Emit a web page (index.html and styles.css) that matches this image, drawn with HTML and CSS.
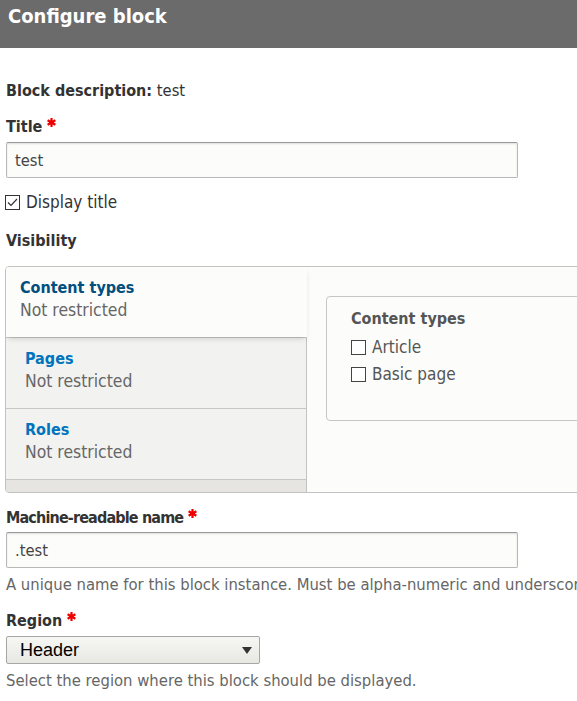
FILE: index.html
```html
<!DOCTYPE html>
<html lang="en">
<head>
<meta charset="utf-8">
<title>Configure block</title>
<link rel="stylesheet" href="styles.css">
</head>
<body>
<header class="dialog-title">Configure block</header>
<main class="form">
  <div class="row row-desc"><strong class="strong">Block description:</strong> test</div>

  <div class="field field-first">
    <label class="label">Title<svg class="req" viewBox="0 0 9 9" width="9" height="9"><path d="M4.5 0V9M0.6 2.25L8.4 6.75M8.4 2.25L0.6 6.75"/></svg></label>
    <input class="text" type="text" value="test">
  </div>

  <div class="row row-check">
    <span class="box"><svg viewBox="0 0 15 15" width="15" height="15"><polyline points="3,7.5 6,10.5 12,4"/></svg></span>
    <span>Display title</span>
  </div>

  <div class="label label-vis">Visibility</div>

  <div class="vtabs">
    <ul class="vtabs-menu">
      <li class="vtab is-selected"><span class="vtab-title">Content types</span><span class="vtab-sum">Not restricted</span></li>
      <li class="vtab"><span class="vtab-title">Pages</span><span class="vtab-sum">Not restricted</span></li>
      <li class="vtab"><span class="vtab-title">Roles</span><span class="vtab-sum">Not restricted</span></li>
      <li class="vtab-rest"></li>
    </ul>
    <div class="vtabs-pane">
      <div class="fieldset">
        <div class="legend">Content types</div>
        <div class="opt"><span class="box"></span><span>Article</span></div>
        <div class="opt"><span class="box"></span><span>Basic page</span></div>
      </div>
    </div>
  </div>

  <div class="field field-machine">
    <label class="label label-tight">Machine-readable name<svg class="req" viewBox="0 0 9 9" width="9" height="9"><path d="M4.5 0V9M0.6 2.25L8.4 6.75M8.4 2.25L0.6 6.75"/></svg></label>
    <input class="text" type="text" value=".test">
  </div>
  <div class="description desc-machine">A unique name for this block instance. Must be alpha-numeric and underscore separated.</div>

  <div class="field field-region">
    <label class="label">Region<svg class="req" viewBox="0 0 9 9" width="9" height="9"><path d="M4.5 0V9M0.6 2.25L8.4 6.75M8.4 2.25L0.6 6.75"/></svg></label>
    <div class="select"><span>Header</span><svg class="arrow" viewBox="0 0 10 7" width="10" height="7"><path d="M0 0H10L5 7Z"/></svg></div>
  </div>
  <div class="description desc-region">Select the region where this block should be displayed.</div>
</main>
</body>
</html>
```

FILE: styles.css
```css
html, body {
  margin: 0;
  padding: 0;
  overflow: hidden;
}

body {
  width: 577px;
  height: 701px;
  background: #fff;
  color: #333;
  font-family: "DejaVu Sans Condensed", "DejaVu Sans", sans-serif;
  font-size: 17px;
}

.dialog-title {
  box-sizing: border-box;
  height: 48px;
  padding: 4px 0 0 8px;
  background: #6b6b6b;
  color: #fff;
  font-weight: bold;
  font-size: 20px;
  line-height: 24px;
}

.form {
  width: 760px;
  padding-left: 6px;
}

.row {
  line-height: 20px;
  white-space: nowrap;
}

.strong {
  font-size: 16px;
}

.row-desc {
  margin-top: 33px;
  font-size: 16.4px;
}

.label {
  display: flex;
  align-items: flex-start;
  font-weight: bold;
  font-size: 16px;
  line-height: 20px;
  color: #333;
}

.label-tight {
  letter-spacing: -0.85px;
}

.req {
  margin: 1px 0 0 5px;
  stroke: #e00;
  stroke-width: 2.2;
  fill: none;
}

.field-first {
  margin-top: 16px;
}

.text {
  display: block;
  box-sizing: border-box;
  width: 512px;
  height: 36px;
  margin: 5px 0 0;
  padding: 0 8px;
  border: 1px solid #b8b8b8;
  border-top-color: #999;
  border-radius: 2px;
  background: #fcfcfa;
  box-shadow: inset 0 1px 2px rgba(0, 0, 0, 0.12);
  color: #444;
  font-family: "DejaVu Sans Condensed", "DejaVu Sans", sans-serif;
  font-size: 16.4px;
  outline: none;
}

.row-check {
  display: flex;
  align-items: center;
  gap: 6px;
  margin-top: 14px;
  font-size: 17px;
}

.box {
  box-sizing: border-box;
  display: inline-flex;
  width: 15px;
  height: 15px;
  border: 1px solid #333;
  background: #fff;
  flex: none;
}

.row-check .box {
  margin-left: -1px;
}

.box svg {
  margin: -1px;
  fill: none;
  stroke: #333;
  stroke-width: 1.2;
}

.label-vis {
  margin-top: 19px;
}

.vtabs {
  display: flex;
  width: 700px;
  height: 227px;
  box-sizing: border-box;
  margin: 15px 0 0 -1px;
  border: 1px solid #c2c2bf;
  border-radius: 4px;
  background: #fcfcfa;
  overflow: hidden;
}

.vtabs-menu {
  display: flex;
  flex-direction: column;
  width: 301px;
  margin: 0;
  padding: 0;
  list-style: none;
  flex: none;
}

.vtab {
  display: flex;
  flex-direction: column;
  height: 70px;
  box-sizing: border-box;
  padding: 9px 10px 0 19px;
  border-top: 1px solid #c6c6c3;
  border-right: 1px solid #c2c2bf;
  background: #f2f2f0;
}

.vtab.is-selected {
  position: relative;
  z-index: 1;
  padding-top: 9px;
  padding-left: 14px;
  border-top: 0;
  border-right-color: #fcfcfa;
  background: #fcfcfa;
  box-shadow: 0 3px 6px -2px rgba(0, 0, 0, 0.18);
}

.vtab + .vtab {
  height: 71px;
}

.vtab-title {
  font-weight: bold;
  font-size: 16px;
  line-height: 23px;
  color: #0074bd;
}

.is-selected .vtab-title {
  color: #004f80;
}

.vtab-sum {
  font-size: 17.4px;
  line-height: 23px;
  color: #666;
}

.vtab-rest {
  flex: 1;
  border-top: 1px solid #c6c6c3;
  border-right: 1px solid #c2c2bf;
  background: #e6e5e1;
}

.vtabs-pane {
  flex: 1;
  padding: 29px 0 0 19px;
}

.fieldset {
  box-sizing: border-box;
  width: 340px;
  height: 125px;
  padding: 12px 0 0 24px;
  border: 1px solid #c6c6c3;
  border-radius: 4px;
  background: #fcfcfa;
}

.legend {
  font-weight: bold;
  font-size: 16px;
  line-height: 20px;
  color: #555;
}

.opt {
  display: flex;
  align-items: center;
  gap: 6px;
  margin-top: 8px;
  font-size: 17px;
  line-height: 20px;
  color: #555;
}

.opt + .opt {
  margin-top: 7px;
}

.opt .box {
  border-color: #444;
}

.field-machine {
  margin-top: 15px;
}

.field-machine .text {
  margin-top: 4px;
}

.description {
  font-size: 16.5px;
  line-height: 20px;
  color: #666;
  white-space: nowrap;
}

.desc-machine {
  margin-top: 7px;
}

.field-region {
  margin-top: 16px;
}

.select {
  display: flex;
  align-items: center;
  justify-content: space-between;
  box-sizing: border-box;
  width: 254px;
  height: 28px;
  margin-top: 5px;
  padding: 0 7px 0 13px;
  border: 1px solid #a6a6a6;
  border-radius: 2px;
  background: linear-gradient(#f6f6f3, #e8e8e3);
  color: #000;
  font-family: "Liberation Sans", Arial, sans-serif;
  font-size: 18px;
}

.arrow {
  fill: #333;
}

.desc-region {
  margin-top: 7px;
}
```
